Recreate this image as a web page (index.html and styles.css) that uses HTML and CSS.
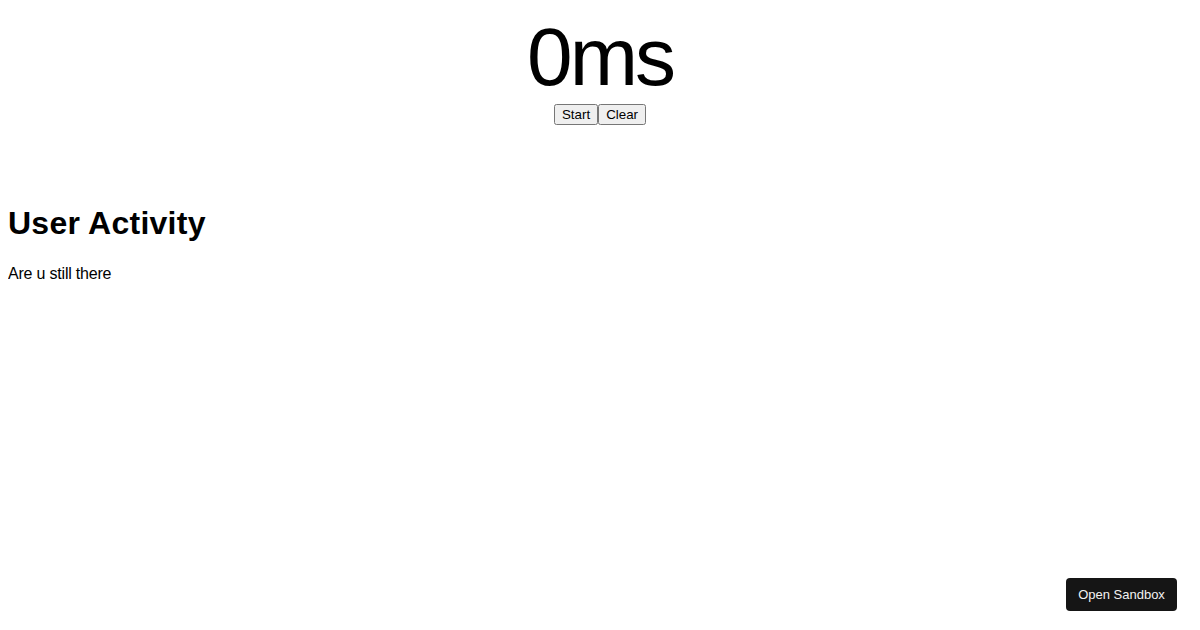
FILE: index.html
```html
<!DOCTYPE html>
<html lang="en">
<head>
  <meta charset="UTF-8">
  <meta name="viewport" content="width=device-width, initial-scale=1.0">
  <title>Timer</title>
  <link rel="stylesheet" href="styles.css">
</head>
<body>
  <div class="timer">
    <div class="timer-value" id="timerValue">0ms</div>
    <div class="timer-controls">
      <button class="timer-button">Start</button><button class="timer-button">Clear</button>
    </div>
  </div>

  <div class="activity">
    <h1 class="activity-title">User Activity</h1>
    <p class="activity-text">Are u still there</p>
  </div>

  <button class="sandbox-button">Open Sandbox</button>
</body>
</html>
```

FILE: styles.css
```css
body {
  font-family: "Liberation Sans", Arial, sans-serif;
  margin: 8px;
  color: black;
  background: white;
}
.timer {
  display: flex;
  flex-direction: column;
  align-items: center;
}
.timer-value {
  font-size: 82px;
  line-height: 1;
  letter-spacing: -3px;
  margin-top: 8px;
}
.timer-controls {
  display: flex;
  margin-top: 6px;
}
.timer-button {
  font-family: "Liberation Sans", Arial, sans-serif;
  font-size: 13.33px;
  padding: 1px 6px;
}
.activity {
  margin-top: 80px;
}
.activity-title {
  font-size: 32px;
  letter-spacing: 0.25px;
  margin: 0 0 23px;
}
.activity-text {
  font-size: 16px;
  letter-spacing: -0.2px;
  margin: 0;
}
.sandbox-button {
  position: fixed;
  right: 23px;
  bottom: 19px;
  width: 111px;
  height: 33px;
  background-color: #151515;
  color: #f2f2f2;
  border: none;
  border-radius: 4px;
  font-family: "Liberation Sans", Arial, sans-serif;
  font-size: 13px;
  cursor: pointer;
}
```
